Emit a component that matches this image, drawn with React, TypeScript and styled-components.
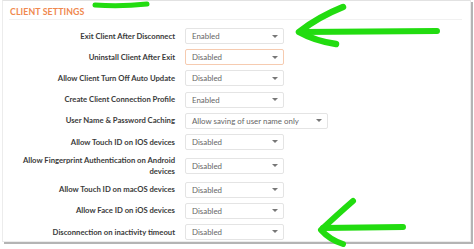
import styled, { createGlobalStyle } from 'styled-components';

const GlobalStyle = createGlobalStyle`
  html, body {
    margin: 0;
    padding: 0;
    background: #ffffff;
  }
  body {
    width: 474px;
    height: 249px;
    overflow: hidden;
    font-family: Lato, "Open Sans", sans-serif;
  }
`;

const Page = styled.div`
  position: relative;
  width: 474px;
  height: 249px;
  padding: 0 3px 0 2px;
  box-sizing: border-box;
`;

const Card = styled.section`
  height: 242px;
  box-sizing: border-box;
  background: #fff;
  border: 1px solid #ececec;
  border-top-color: #e2e2e2;
  box-shadow: 2px 2px 0 #b4b4b4;
  padding: 0 0 0 6px;
`;

const Heading = styled.h3`
  margin: 0 8px 0 0;
  padding: 5px 0 2px 1px;
  font-size: 8.8px;
  font-weight: 700;
  color: #f0894f;
  letter-spacing: 0.1px;
  border-bottom: 1px solid #f1f1f1;
`;

const Rows = styled.div`
  display: flex;
  flex-direction: column;
  gap: 5.2px;
  padding-top: 8px;
`;

const Row = styled.div`
  display: grid;
  grid-template-columns: 166px 1fr;
  column-gap: 10px;
  align-items: center;
  min-height: 16px;
`;

const Label = styled.label`
  text-align: right;
  font-size: 7.7px;
  line-height: 10.6px;
  font-weight: 700;
  color: #3b3b3b;
  padding-left: 12px;
`;

const Select = styled.div<{ $wide?: boolean; $focus?: boolean }>`
  display: flex;
  align-items: center;
  justify-content: space-between;
  box-sizing: border-box;
  width: ${(p) => (p.$wide ? '143px' : '99px')};
  height: 16px;
  padding: 0 5px 0 6px;
  border: 1px solid ${(p) => (p.$focus ? '#f6cbb0' : '#e4e4e4')};
  border-radius: 2px;
  background: #fff;
  font-size: 7.9px;
  color: #666;
`;

const Caret = styled.span`
  width: 0;
  height: 0;
  border-left: 3px solid transparent;
  border-right: 3px solid transparent;
  border-top: 3.5px solid #777;
`;

const Marks = styled.svg`
  position: absolute;
  inset: 0;
  pointer-events: none;
`;

type Setting = { label: string; value: string; wide?: boolean; focus?: boolean };

const settings: Setting[] = [
  { label: 'Exit Client After Disconnect', value: 'Enabled' },
  { label: 'Uninstall Client After Exit', value: 'Disabled', focus: true },
  { label: 'Allow Client Turn Off Auto Update', value: 'Disabled' },
  { label: 'Create Client Connection Profile', value: 'Enabled' },
  { label: 'User Name & Password Caching', value: 'Allow saving of user name only', wide: true },
  { label: 'Allow Touch ID on IOS devices', value: 'Disabled' },
  { label: 'Allow Fingerprint Authentication on Android devices', value: 'Disabled' },
  { label: 'Allow Touch ID on macOS devices', value: 'Disabled' },
  { label: 'Allow Face ID on iOS devices', value: 'Disabled' },
  { label: 'Disconnection on inactivity timeout', value: 'Disabled' },
];

const App = () => {
  return (
    <Page>
      <GlobalStyle />
      <Card>
        <Heading>CLIENT SETTINGS</Heading>
        <Rows>
          {settings.map((s) => (
            <Row key={s.label}>
              <Label>{s.label}</Label>
              <Select $wide={s.wide} $focus={s.focus}>
                <span>{s.value}</span>
                <Caret />
              </Select>
            </Row>
          ))}
        </Rows>
      </Card>
      <Marks width="474" height="249" viewBox="0 0 474 249">
        <g fill="none" stroke="#22dc10" strokeLinecap="round" strokeLinejoin="round">
          <path d="M95,5 Q120,7 147,4" strokeWidth="5" />
          <path d="M301,32 L437,31" strokeWidth="6" />
          <path d="M343,7 Q318,17 299,32 Q315,41 336,44" strokeWidth="6.5" />
          <path d="M323,228 L403,227" strokeWidth="6" />
          <path d="M353,201 Q338,214 321,230 Q330,240 343,244" strokeWidth="6" />
        </g>
      </Marks>
    </Page>
  );
};

export default App;
